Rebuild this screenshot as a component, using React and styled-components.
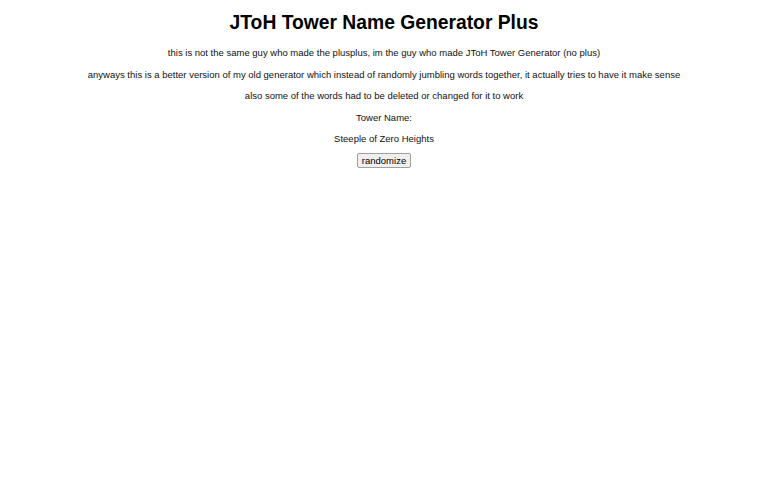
import React, { useState } from "react";
import styled, { createGlobalStyle } from "styled-components";

const GlobalStyle = createGlobalStyle`
  body {
    margin: 0;
    background: #ffffff;
    font-family: "Liberation Sans", Arial, sans-serif;
    color: #000000;
  }
`;

const Page = styled.div`
  display: flex;
  flex-direction: column;
  align-items: center;
  padding-top: 11px;
  text-align: center;
`;

const Title = styled.h1`
  margin: 0 0 7px;
  font-size: 19.3px;
  font-weight: bold;
  line-height: 24px;
`;

const Line = styled.p`
  margin: 5px 0;
  font-size: 9.5px;
  line-height: 11.5px;
  color: #111111;
`;

const Button = styled.button`
  margin-top: 3px;
  padding: 1px 4px 0;
  font-family: "Liberation Sans", Arial, sans-serif;
  font-size: 9.5px;
  line-height: 12px;
  color: #000000;
  background: #efefef;
  border: 1px solid #a0a0a0;
  border-radius: 2px;
`;

const prefixes = ["Steeple", "Tower", "Citadel", "Spire", "Obelisk"];
const words = ["Zero Heights", "Eternal Ascent", "Annoying Stairs", "Slippery Slopes", "Vertical Madness"];

export default function App() {
  const [name, setName] = useState("Steeple of Zero Heights");

  const randomize = () => {
    const a = prefixes[Math.floor(Math.random() * prefixes.length)];
    const b = words[Math.floor(Math.random() * words.length)];
    setName(`${a} of ${b}`);
  };

  return (
    <>
      <GlobalStyle />
      <Page>
        <Title>JToH Tower Name Generator Plus</Title>
        <Line>this is not the same guy who made the plusplus, im the guy who made JToH Tower Generator (no plus)</Line>
        <Line>anyways this is a better version of my old generator which instead of randomly jumbling words together, it actually tries to have it make sense</Line>
        <Line>also some of the words had to be deleted or changed for it to work</Line>
        <Line>Tower Name:</Line>
        <Line>{name}</Line>
        <Button onClick={randomize}>randomize</Button>
      </Page>
    </>
  );
}
